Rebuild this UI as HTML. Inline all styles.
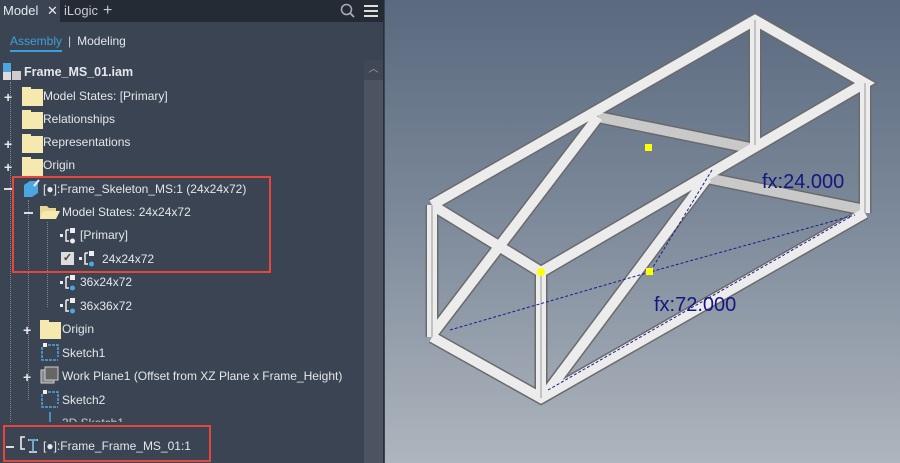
<!DOCTYPE html>
<html><head><meta charset="utf-8"><style>
*{margin:0;padding:0;box-sizing:border-box}
body{width:900px;height:463px;overflow:hidden;background:#3b4453;font-family:"Liberation Sans",Arial,sans-serif;position:relative}
#left{position:absolute;left:0;top:0;width:384px;height:463px;background:#3b4453;border-right:1px solid #2a2f38}
#tabs{position:absolute;left:0;top:0;width:384px;height:22px;background:#252b35}
#tabs .t1{position:absolute;left:0;top:0;width:60px;height:22px;background:#3b4453;color:#e6e9ee;font-size:13px;line-height:22px;padding-left:3px}
.tx{color:#c8ccd2;font-size:13px;position:absolute;top:0;line-height:22px}
#sub{position:absolute;left:10px;top:34px;font-size:12px}
.row{position:absolute;left:0;height:22px;line-height:22px;font-size:12px;color:#e4e7eb;white-space:nowrap}
.fold{position:absolute;width:21px;height:17px;background:#f5e9b0;border-top:3px solid #f5e9b0}
.fold:before{content:"";position:absolute;left:0;top:-5px;width:9px;height:4px;background:#f5e9b0}
.plus{position:absolute;color:#e6e6e6;font-size:14px;font-weight:bold;line-height:14px}
#sb{position:absolute;left:364px;top:60px;width:19px;height:403px;background:#4c5462}
#sb .up{height:20px;background:#404856;color:#9aa2ae;font-size:10px;text-align:center;line-height:20px}
.red{position:absolute;border:2px solid #e8453c}
.dot{position:absolute;border-left:1px dotted #7c8594}
#vp{position:absolute;left:385px;top:0;width:515px;height:463px;background:linear-gradient(#5a697f,#7b8899 45%,#aeb5bd)}
</style></head><body>
<div id="left">
<div id="tabs"><div class="t1">Model <span style="margin-left:5px">✕</span></div>
<div class="tx" style="left:64px">iLogic</div><div class="tx" style="left:103px;font-size:16px">+</div>
<svg style="position:absolute;left:340px;top:3px" width="16" height="16"><circle cx="6.5" cy="6.5" r="5" fill="none" stroke="#aab" stroke-width="1.5"/><line x1="10" y1="10" x2="14" y2="14" stroke="#aab" stroke-width="1.8"/></svg>
<div style="position:absolute;left:364px;top:5px;width:14px;height:2px;background:#ddd;box-shadow:0 5px 0 #ddd,0 10px 0 #ddd"></div>
</div>
<div id="sub"><span style="color:#3aa0db;border-bottom:2px solid #3aa0db;padding-bottom:2px">Assembly</span><span style="color:#ccc;margin:0 6px">|</span><span style="color:#e4e7eb">Modeling</span></div>
<div id="sb"><div class="up">︿</div></div>
<div class="dot" style="left:10px;top:82px;height:370px"></div>
<div class="dot" style="left:28px;top:200px;height:200px"></div>
<div class="dot" style="left:47px;top:222px;height:85px"></div>
<svg style="position:absolute;left:3px;top:63px" width="20" height="18"><rect x="0" y="0" width="8" height="10" fill="#4ea6e0"/><rect x="0" y="9" width="8" height="8" fill="#ddd"/><rect x="9" y="8" width="9" height="9" fill="#ccc"/></svg>
<div class="row" style="left:24px;top:61px;font-weight:bold;font-size:12.5px">Frame_MS_01.iam</div>
<div class="plus" style="left:4px;top:90px">+</div><div class="fold" style="left:22px;top:89px"></div><div class="row" style="left:43px;top:85px">Model States: [Primary]</div>
<div class="fold" style="left:22px;top:112px"></div><div class="row" style="left:43px;top:108px">Relationships</div>
<div class="plus" style="left:4px;top:137px">+</div><div class="fold" style="left:22px;top:136px"></div><div class="row" style="left:43px;top:131px">Representations</div>
<div class="plus" style="left:4px;top:160px">+</div><div class="fold" style="left:22px;top:159px"></div><div class="row" style="left:43px;top:154px">Origin</div>
<div style="position:absolute;left:4px;top:188px;width:9px;height:2px;background:#ddd"></div>
<svg style="position:absolute;left:22px;top:178px" width="20" height="20"><path d="M2 7 L8 3 H16 V15 L10 19 H2Z" fill="#4ea6e0"/><path d="M12 8 L17 2" stroke="#eee" stroke-width="2"/></svg>
<div class="row" style="left:43px;top:178px">[●]:Frame_Skeleton_MS:1 (24x24x72)</div>
<div style="position:absolute;left:24px;top:212px;width:9px;height:2px;background:#ddd"></div>
<svg style="position:absolute;left:39px;top:204px" width="22" height="16"><path d="M1 2 H8 L10 4 H17 V15 H1Z" fill="#e8d896"/><path d="M4 7 H21 L17 15 H1Z" fill="#f5e9b0"/></svg>
<div class="row" style="left:62px;top:201px">Model States: 24x24x72</div>
<svg style="position:absolute;left:60px;top:227px" width="18" height="18"><rect x="0" y="7" width="3" height="3" fill="#eee"/><path d="M6 3 V14 H9 M6 3 H9" stroke="#eee" fill="none" stroke-width="1.5"/><rect x="10" y="1" width="5" height="5" fill="#eee"/><circle cx="12.5" cy="14" r="2.5" fill="#eee"/></svg>
<div class="row" style="left:80px;top:224px">[Primary]</div>
<div style="position:absolute;left:61px;top:252px;width:13px;height:13px;background:#ddd;color:#444;font-size:11px;line-height:13px;text-align:center;font-weight:bold">✓</div>
<svg style="position:absolute;left:79px;top:250px" width="18" height="18"><rect x="0" y="7" width="3" height="3" fill="#eee"/><path d="M6 3 V14 H9 M6 3 H9" stroke="#eee" fill="none" stroke-width="1.5"/><rect x="10" y="1" width="5" height="5" fill="#eee"/><circle cx="12.5" cy="14" r="2.5" fill="#4ea6e0"/></svg>
<div class="row" style="left:102px;top:248px">24x24x72</div>
<svg style="position:absolute;left:60px;top:274px" width="18" height="18"><rect x="0" y="7" width="3" height="3" fill="#eee"/><path d="M6 3 V14 H9 M6 3 H9" stroke="#eee" fill="none" stroke-width="1.5"/><rect x="10" y="1" width="5" height="5" fill="#eee"/><circle cx="12.5" cy="14" r="2.5" fill="#4ea6e0"/></svg>
<div class="row" style="left:80px;top:271px">36x24x72</div>
<svg style="position:absolute;left:60px;top:297px" width="18" height="18"><rect x="0" y="7" width="3" height="3" fill="#eee"/><path d="M6 3 V14 H9 M6 3 H9" stroke="#eee" fill="none" stroke-width="1.5"/><rect x="10" y="1" width="5" height="5" fill="#eee"/><circle cx="12.5" cy="14" r="2.5" fill="#4ea6e0"/></svg>
<div class="row" style="left:80px;top:295px">36x36x72</div>
<div class="plus" style="left:23px;top:323px">+</div><div class="fold" style="left:40px;top:322px"></div><div class="row" style="left:62px;top:318px">Origin</div>
<svg style="position:absolute;left:40px;top:342px" width="20" height="20"><path d="M2 5 V18 H18 M4 3 H18 V15" stroke="#4ea6e0" fill="none" stroke-width="1.5" stroke-dasharray="3 1"/><rect x="3" y="1" width="4" height="4" fill="#eee"/></svg>
<div class="row" style="left:62px;top:342px">Sketch1</div>
<div class="plus" style="left:23px;top:370px">+</div>
<svg style="position:absolute;left:40px;top:366px" width="20" height="20"><rect x="1" y="4" width="13" height="13" fill="#888" stroke="#ccc"/><rect x="5" y="1" width="13" height="13" fill="#666" stroke="#ccc"/></svg>
<div class="row" style="left:62px;top:365px">Work Plane1 (Offset from XZ Plane x Frame_Height)</div>
<svg style="position:absolute;left:40px;top:389px" width="20" height="20"><path d="M2 5 V18 H18 M4 3 H18 V15" stroke="#4ea6e0" fill="none" stroke-width="1.5" stroke-dasharray="3 1"/><rect x="3" y="1" width="4" height="4" fill="#eee"/></svg>
<div class="row" style="left:62px;top:389px">Sketch2</div>
<svg style="position:absolute;left:40px;top:412px" width="20" height="20"><path d="M10 0 V14 H2" stroke="#4ea6e0" fill="none" stroke-width="1.5"/></svg>
<div class="row" style="left:62px;top:412px;color:#c8ccd2">3D Sketch1</div>
<div style="position:absolute;left:0;top:422px;width:210px;height:41px;background:#3b4453"></div>
<div style="position:absolute;left:6px;top:446px;width:8px;height:2px;background:#ddd"></div>
<svg style="position:absolute;left:20px;top:435px" width="20" height="20"><path d="M5 2 H1 V14 H5 M8 5 H18 M13 5 V17 M9 17 H17" stroke="#eee" fill="none" stroke-width="1.6"/><path d="M9 5 H17 M13 5 V17" stroke="#4ea6e0" stroke-width="1.2"/></svg>
<div class="row" style="left:43px;top:435px">[●]:Frame_Frame_MS_01:1</div>
<div class="red" style="left:12px;top:176px;width:259px;height:97px"></div>
<div class="red" style="left:3px;top:425px;width:208px;height:37px"></div>
</div>
<div id="vp"></div>
<svg style="position:absolute;left:0;top:0" width="900" height="463">
<g fill="none" stroke-linecap="butt">
<g stroke="#6a6a6a" stroke-width="13">
<path d="M598 117 L750 148 M707 178 L865 210 M755 20 L755 145 M432 205 L432 337 M865 83 L865 213 M432 337 L541 398 L865 213 M598 117 L434 332 M707 178 L545 395 M541 272 L541 398 M432 205 L755 20 L865 83 L541 272 L432 205"/>
</g>
<g stroke="#c9c9c9" stroke-width="10">
<path d="M598 117 L750 148 M707 178 L865 210"/>
</g>
<g stroke="#ececec" stroke-width="10">
<path d="M755 20 L755 145 M432 205 L432 337 M865 83 L865 213 M432 337 L541 398 L865 213 M598 117 L434 332 M707 178 L545 395 M541 272 L541 398 M432 205 L755 20 L865 83 L541 272 L432 205"/>
</g>
<g stroke="#999" stroke-width="1">
<path d="M755 20 L755 145 M432 205 L432 337 M865 83 L865 213 M541 272 L541 398"/>
</g>
<path d="M450 330 L650 272 L855 215 M712 170 L650 272 M548 390 L850 217" stroke="#1a1a8a" stroke-width="1" stroke-dasharray="3 2"/>
</g>
<rect x="645" y="144" width="7" height="7" fill="#ffff00"/>
<rect x="646" y="268" width="7" height="7" fill="#ffff00"/>
<circle cx="541" cy="272" r="4" fill="#ffff00"/>
<text x="762" y="188" font-family="Liberation Sans,Arial,sans-serif" font-size="20" fill="#161680">fx:24.000</text>
<text x="654" y="311" font-family="Liberation Sans,Arial,sans-serif" font-size="20" fill="#161680">fx:72.000</text>
</svg>
</body></html>
